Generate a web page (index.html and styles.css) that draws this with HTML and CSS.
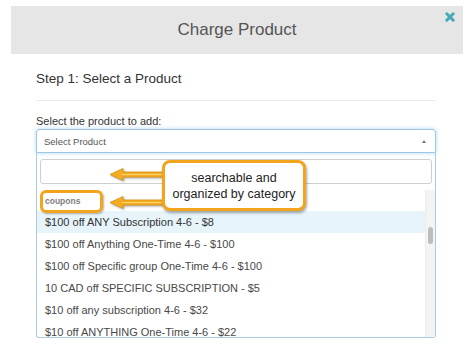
FILE: index.html
```html
<!DOCTYPE html>
<html>
<head>
    <title>Charge Product</title>
    <link rel="stylesheet" href="styles.css">
</head>
<body>
    <div class="modal">
        <div class="modal-header">
            <h3>Charge Product</h3>
            <span class="close">
                <svg width="10" height="10" viewBox="0 0 10 10">
                    <line x1="1.8" y1="1.8" x2="8.2" y2="8.2"/>
                    <line x1="8.2" y1="1.8" x2="1.8" y2="8.2"/>
                </svg>
            </span>
        </div>
        <div class="modal-body">
            <h4>Step 1: Select a Product</h4>
            <hr>
            <label>Select the product to add:</label>
            <div class="picker">
                <div class="picker-toggle">
                    <span>Select Product</span>
                    <span class="caret"></span>
                </div>
                <div class="picker-drop">
                    <div class="picker-search"><input type="text"></div>
                    <div class="picker-results">
                        <ul>
                            <li class="group">coupons</li>
                            <li class="option active">$100 off ANY Subscription 4-6 - $8</li>
                            <li class="option">$100 off Anything One-Time 4-6 - $100</li>
                            <li class="option">$100 off Specific group One-Time 4-6 - $100</li>
                            <li class="option">10 CAD off SPECIFIC SUBSCRIPTION - $5</li>
                            <li class="option">$10 off any subscription 4-6 - $32</li>
                            <li class="option">$10 off ANYTHING One-Time 4-6 - $22</li>
                        </ul>
                        <div class="scrollbar"><div class="thumb"></div></div>
                    </div>
                </div>

                <!-- annotation -->
                <span class="mark"></span>
                <svg class="arrows" width="62" height="48" viewBox="0 0 62 48">
                    <polygon points="4,10.5 17,4.5 17,8 58,8 58,13 17,13 17,16.5"/>
                    <line x1="16" y1="10.5" x2="58" y2="10.5"/>
                    <polygon points="4,38.5 17,32.5 17,36 58,36 58,41 17,41 17,44.5"/>
                    <line x1="16" y1="38.5" x2="58" y2="38.5"/>
                </svg>
                <div class="callout">searchable and<br>organized by category</div>
            </div>
        </div>
    </div>
</body>
</html>
```

FILE: styles.css
```css
body {
    margin: 0;
    background: white;
    font-family: "Liberation Sans", Arial, sans-serif;
    color: #333;
}

.modal {
    margin: 6px 11px 0;
}

.modal-header {
    position: relative;
    height: 48px;
    background: #e6e6e6;
    display: flex;
    align-items: center;
    justify-content: center;
}

.modal-header h3 {
    margin: 0;
    font-size: 17px;
    font-weight: normal;
    color: #555;
}

.close {
    position: absolute;
    top: 6px;
    right: 8px;
    line-height: 0;
}

.close line {
    stroke: #45a9b6;
    stroke-width: 3;
    stroke-linecap: round;
}

.modal-body {
    padding: 0 27px 0 25px;
}

.modal-body h4 {
    margin: 0;
    padding-top: 15px;
    font-size: 13.5px;
    line-height: 20px;
    font-weight: normal;
    color: #333;
}

.modal-body hr {
    margin: 11px 0 12px;
    border: 0;
    border-top: 1px solid #ebebeb;
}

.modal-body label {
    display: block;
    font-size: 11px;
    line-height: 16px;
    color: #333;
}

.picker {
    position: relative;
}

.picker-toggle {
    height: 24px;
    box-sizing: border-box;
    border: 1px solid #9fc6e4;
    border-radius: 3px 3px 0 0;
    box-shadow: 0 0 4px rgba(82, 168, 236, 0.45);
    padding: 0 9px 0 7px;
    display: flex;
    align-items: center;
    justify-content: space-between;
    font-size: 9.5px;
    color: #555;
}

.caret {
    width: 0;
    height: 0;
    border-left: 2.5px solid transparent;
    border-right: 2.5px solid transparent;
    border-bottom: 3px solid #777;
}

.picker-drop {
    border: 1px solid #a9cbe4;
    border-top: 0;
    border-radius: 0 0 3px 3px;
}

.picker-search {
    padding: 6px 3px 6px;
}

.picker-search input {
    display: block;
    width: 100%;
    height: 25px;
    box-sizing: border-box;
    border: 1px solid #cfcfcf;
    border-radius: 3px;
    margin: 0;
}

.picker-results {
    display: flex;
    height: 147px;
    overflow: hidden;
}

.picker-results ul {
    flex: 1;
    margin: 0;
    padding: 0;
    list-style: none;
}

.group {
    height: 21px;
    line-height: 22px;
    padding-left: 8px;
    font-size: 8.5px;
    font-weight: bold;
    color: #808080;
}

.option {
    height: 22px;
    line-height: 22px;
    padding-left: 8px;
    font-size: 11px;
    color: #484848;
    white-space: nowrap;
}

.option.active {
    background: #e7f4fa;
    color: #333;
}

.scrollbar {
    width: 9px;
    background: #f4f4f4;
    border-left: 1px solid #ececec;
}

.thumb {
    width: 5px;
    height: 17px;
    margin: 37px 0 0 2px;
    border-radius: 3px;
    background: #bdbdbd;
}

.mark {
    position: absolute;
    left: 4px;
    top: 61px;
    width: 63px;
    height: 23px;
    box-sizing: border-box;
    border: 3px solid #f2a51c;
    border-radius: 6px;
    box-shadow: 1px 1px 2px rgba(0, 0, 0, 0.3);
}

.arrows {
    position: absolute;
    left: 70px;
    top: 35px;
    filter: drop-shadow(1px 1px 1px rgba(0, 0, 0, 0.35));
}

.arrows polygon {
    fill: #f4ad22;
    stroke: #dc900c;
    stroke-width: 0.8;
    stroke-linejoin: round;
}

.arrows line {
    stroke: #fcd56e;
    stroke-width: 1.2;
}

.callout {
    position: absolute;
    left: 126px;
    top: 31px;
    width: 144px;
    height: 51px;
    box-sizing: border-box;
    border: 3px solid #f2a51c;
    border-radius: 8px;
    background: white;
    box-shadow: 1px 2px 3px rgba(0, 0, 0, 0.35);
    display: flex;
    align-items: center;
    justify-content: center;
    text-align: center;
    font-size: 12.5px;
    line-height: 16px;
    color: #222;
}
```
